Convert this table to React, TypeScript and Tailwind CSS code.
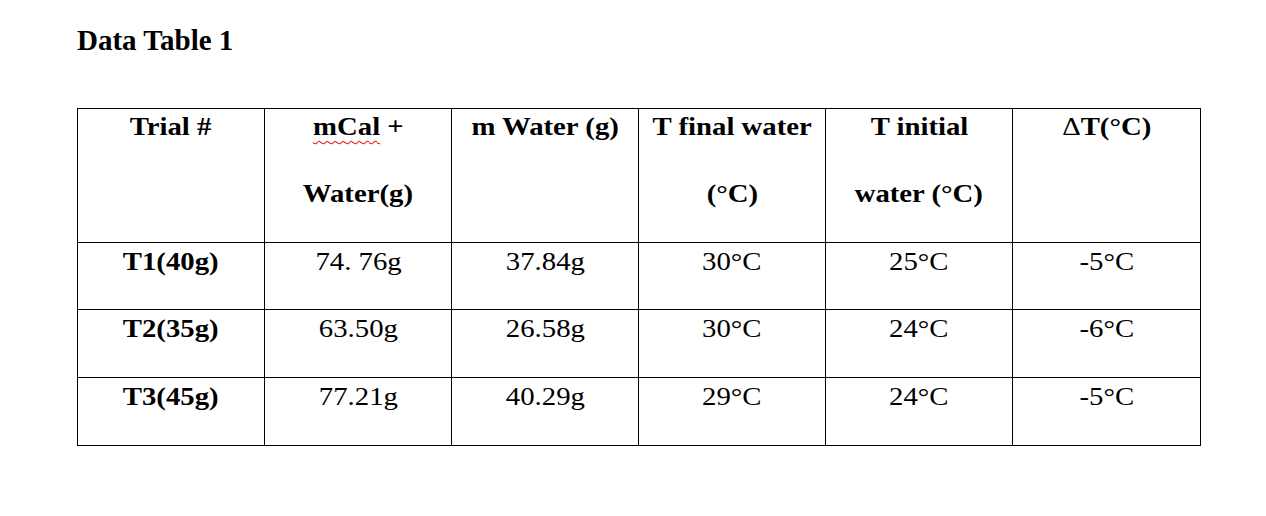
const serif = "font-['Liberation_Serif','Times_New_Roman',serif]"

const rows = [
  { trial: 'T1(40g)', total: '74. 76g', water: '37.84g', final: '30°C', initial: '25°C', delta: '-5°C', h: 'h-[67px]' },
  { trial: 'T2(35g)', total: '63.50g', water: '26.58g', final: '30°C', initial: '24°C', delta: '-6°C', h: 'h-[68px]' },
  { trial: 'T3(45g)', total: '77.21g', water: '40.29g', final: '29°C', initial: '24°C', delta: '-5°C', h: 'h-[68px]' },
]

// Word renders the cell text a bit wide, so stretch it horizontally
const Wide = ({ children }: { children: React.ReactNode }) => (
  <span className="inline-block origin-center scale-x-[1.15] whitespace-nowrap">{children}</span>
)

const HeadCell = ({ lines }: { lines: React.ReactNode[] }) => (
  <div className="flex h-[134px] flex-col items-center gap-[37px] border-r border-b border-black pt-[3px] font-bold">
    {lines.map((line, i) => (
      <div key={i} className="leading-[30px]">
        <Wide>{line}</Wide>
      </div>
    ))}
  </div>
)

const App = () => {
  return (
    <div className={`min-h-[516px] w-[1266px] bg-white pt-[24px] pl-[77px] text-black ${serif}`}>
      <h1 className="text-[29px] leading-[33px] font-bold">Data Table 1</h1>

      <div className="mt-[51px] grid w-max grid-cols-[repeat(5,187px)_188px] border-t border-l border-black text-[25px]">
        {/* header */}
        <HeadCell lines={['Trial #']} />
        <HeadCell
          lines={[
            <>
              <span className="underline decoration-[#e02020] decoration-wavy decoration-1 underline-offset-[5px]">mCal</span> +
            </>,
            'Water(g)',
          ]}
        />
        <HeadCell lines={['m Water (g)']} />
        <HeadCell lines={['T final water', '(°C)']} />
        <HeadCell lines={['T initial', 'water (°C)']} />
        <HeadCell
          lines={[
            <>
              <span className="font-normal">Δ</span>T(°C)
            </>,
          ]}
        />

        {/* data rows */}
        {rows.map((r) =>
          [r.trial, r.total, r.water, r.final, r.initial, r.delta].map((v, i) => (
            <div
              key={r.trial + i}
              className={`${r.h} border-r border-b border-black pt-[4px] text-center leading-[30px] ${i === 0 ? 'font-bold' : ''}`}
            >
              <Wide>{v}</Wide>
            </div>
          ))
        )}
      </div>
    </div>
  )
}

export default App
